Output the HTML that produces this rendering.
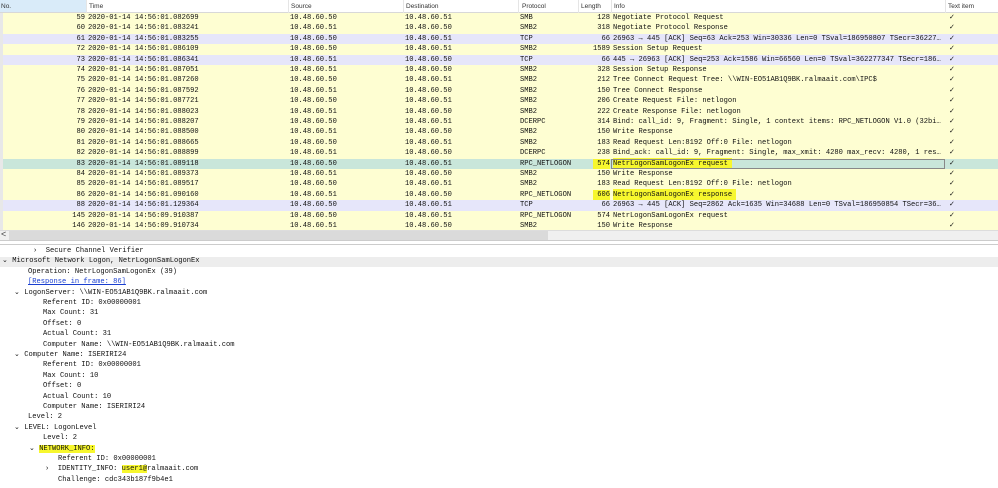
<!DOCTYPE html>
<html><head><style>
*{margin:0;padding:0;box-sizing:border-box}
body{width:998px;height:488px;overflow:hidden;background:#fff;font-family:"Liberation Mono",monospace;font-size:7.1px;color:#111;position:relative}
.hdr{position:absolute;top:0;left:0;width:998px;height:13px;background:#fff;border-bottom:1px solid #d8d8d8;font-family:"Liberation Sans",sans-serif;font-size:6.5px;color:#333}
.hdr span{position:absolute;top:3px}
.hdr .no{left:0;top:0;width:86px;height:12px;background:#d9ebf9;padding:3px 0 0 1px}
.sep{position:absolute;top:0;width:1px;height:13px;background:#e5e5e5}
.r{position:absolute;left:0;width:998px;height:10.4px;background:#fefed2;line-height:10.4px;white-space:pre}
.r span{position:absolute;top:0}
.t{background:#e6e6fa}
.s{background:#c9e6da}
.hl{background:#f7f72e}
.d{position:absolute;left:0;width:998px;height:10.4px;line-height:10.4px;white-space:pre}
</style></head><body>
<div class="hdr">
<span class="no">No.</span><span style="left:89px">Time</span><span style="left:291px">Source</span><span style="left:406px">Destination</span><span style="left:522px">Protocol</span><span style="left:581px">Length</span><span style="left:614px">Info</span><span style="left:948px">Text item</span>
<div class="sep" style="left:86px"></div><div class="sep" style="left:288px"></div><div class="sep" style="left:403px"></div><div class="sep" style="left:518px"></div><div class="sep" style="left:578px"></div><div class="sep" style="left:611px"></div><div class="sep" style="left:945px"></div>
</div>
<div id="rows"></div>
<div style="position:absolute;top:13px;left:0;width:3px;height:217px;background:#e8e8e8"></div>
<div style="position:absolute;top:230px;left:0;width:998px;height:11px;background:#f0f0f0;border-top:1px solid #ddd;border-bottom:1px solid #ccc"></div>
<div style="position:absolute;top:231px;left:9px;width:539px;height:9px;background:#dadada"></div>
<div style="position:absolute;top:229px;left:1px;font-size:9px;font-family:'Liberation Sans',sans-serif;color:#444">&lt;</div>
<div style="position:absolute;top:244px;left:0;width:998px;height:1px;background:#ccc"></div>
<div style="position:absolute;top:256.5px;left:0;width:998px;height:10.4px;background:#ededed"></div>
<div id="det"></div>
<script>
var R=[
["59","2020-01-14 14:56:01.082699","10.48.60.50","10.48.60.51","SMB","128","Negotiate Protocol Request",""],
["60","2020-01-14 14:56:01.083241","10.48.60.51","10.48.60.50","SMB2","318","Negotiate Protocol Response",""],
["61","2020-01-14 14:56:01.083255","10.48.60.50","10.48.60.51","TCP","66","26963 → 445 [ACK] Seq=63 Ack=253 Win=30336 Len=0 TSval=186950807 TSecr=36227…","t"],
["72","2020-01-14 14:56:01.086109","10.48.60.50","10.48.60.51","SMB2","1589","Session Setup Request",""],
["73","2020-01-14 14:56:01.086341","10.48.60.51","10.48.60.50","TCP","66","445 → 26963 [ACK] Seq=253 Ack=1586 Win=66560 Len=0 TSval=362277347 TSecr=186…","t"],
["74","2020-01-14 14:56:01.087051","10.48.60.51","10.48.60.50","SMB2","328","Session Setup Response",""],
["75","2020-01-14 14:56:01.087260","10.48.60.50","10.48.60.51","SMB2","212","Tree Connect Request Tree: \\\\WIN-EO51AB1Q9BK.ralmaait.com\\IPC$",""],
["76","2020-01-14 14:56:01.087592","10.48.60.51","10.48.60.50","SMB2","150","Tree Connect Response",""],
["77","2020-01-14 14:56:01.087721","10.48.60.50","10.48.60.51","SMB2","206","Create Request File: netlogon",""],
["78","2020-01-14 14:56:01.088023","10.48.60.51","10.48.60.50","SMB2","222","Create Response File: netlogon",""],
["79","2020-01-14 14:56:01.088207","10.48.60.50","10.48.60.51","DCERPC","314","Bind: call_id: 9, Fragment: Single, 1 context items: RPC_NETLOGON V1.0 (32bi…",""],
["80","2020-01-14 14:56:01.088500","10.48.60.51","10.48.60.50","SMB2","150","Write Response",""],
["81","2020-01-14 14:56:01.088665","10.48.60.50","10.48.60.51","SMB2","183","Read Request Len:8192 Off:0 File: netlogon",""],
["82","2020-01-14 14:56:01.088899","10.48.60.51","10.48.60.50","DCERPC","238","Bind_ack: call_id: 9, Fragment: Single, max_xmit: 4280 max_recv: 4280, 1 res…",""],
["83","2020-01-14 14:56:01.089118","10.48.60.50","10.48.60.51","RPC_NETLOGON","574","NetrLogonSamLogonEx request","s"],
["84","2020-01-14 14:56:01.089373","10.48.60.51","10.48.60.50","SMB2","150","Write Response",""],
["85","2020-01-14 14:56:01.089517","10.48.60.50","10.48.60.51","SMB2","183","Read Request Len:8192 Off:0 File: netlogon",""],
["86","2020-01-14 14:56:01.090160","10.48.60.51","10.48.60.50","RPC_NETLOGON","606","NetrLogonSamLogonEx response","h"],
["88","2020-01-14 14:56:01.129364","10.48.60.50","10.48.60.51","TCP","66","26963 → 445 [ACK] Seq=2862 Ack=1635 Win=34688 Len=0 TSval=186950854 TSecr=36…","t"],
["145","2020-01-14 14:56:09.910387","10.48.60.50","10.48.60.51","RPC_NETLOGON","574","NetrLogonSamLogonEx request",""],
["146","2020-01-14 14:56:09.910734","10.48.60.51","10.48.60.50","SMB2","150","Write Response",""]];
var h="";
R.forEach(function(r,i){
 var y=13+i*10.4;
 var c=r[7]=="t"?"t":(r[7]=="s"?"s":"");
 var info=r[6];
 var hi=(r[7]=="s"||r[7]=="h");
 if(hi) info='<span class="hl" style="position:static;padding:2px 4px 2px 0">'+info+'</span>';
 h+='<div class="r '+c+'" style="top:'+y+'px;'+(y+10.4>230?'height:'+(230-y)+'px;overflow:hidden':'')+'">'+
 '<span style="right:'+(998-85)+'px">'+r[0]+'</span><span style="left:88px">'+r[1]+'</span><span style="left:290px">'+r[2]+'</span><span style="left:405px">'+r[3]+'</span><span style="left:520px">'+r[4]+'</span><span style="right:'+(998-610)+'px'+(hi?';background:#f7f72e;padding-left:4px':'')+'">'+r[5]+'</span><span style="left:613px">'+info+'</span><span style="left:949px">✓</span>'+
 (r[7]=="s"?'<div style="position:absolute;left:611px;top:0;width:334px;height:10px;border:1px solid #888"></div>':'')+'</div>';
});
document.getElementById("rows").innerHTML=h;
var D=[
[33,"›  Secure Channel Verifier"],
[2,"⌄ Microsoft Network Logon, NetrLogonSamLogonEx"],
[28,"Operation: NetrLogonSamLogonEx (39)"],
[28,'<span style="color:#1a3fd0;text-decoration:underline">[Response in frame: 86]</span>'],
[14,"⌄ LogonServer: \\\\WIN-EO51AB1Q9BK.ralmaait.com"],
[43,"Referent ID: 0x00000001"],
[43,"Max Count: 31"],
[43,"Offset: 0"],
[43,"Actual Count: 31"],
[43,"Computer Name: \\\\WIN-EO51AB1Q9BK.ralmaait.com"],
[14,"⌄ Computer Name: ISERIRI24"],
[43,"Referent ID: 0x00000001"],
[43,"Max Count: 10"],
[43,"Offset: 0"],
[43,"Actual Count: 10"],
[43,"Computer Name: ISERIRI24"],
[28,"Level: 2"],
[14,"⌄ LEVEL: LogonLevel"],
[43,"Level: 2"],
[29,'⌄ <span class="hl">NETWORK_INFO:</span>'],
[58,"Referent ID: 0x00000001"],
[45,'›  IDENTITY_INFO: <span class="hl">user1@</span>ralmaait.com'],
[58,"Challenge: cdc343b187f9b4e1"]];
var g="";
D.forEach(function(d,i){g+='<div class="d" style="top:'+(246+i*10.4)+'px;left:'+d[0]+'px">'+d[1]+'</div>';});
document.getElementById("det").innerHTML=g;
</script>
</body></html>
